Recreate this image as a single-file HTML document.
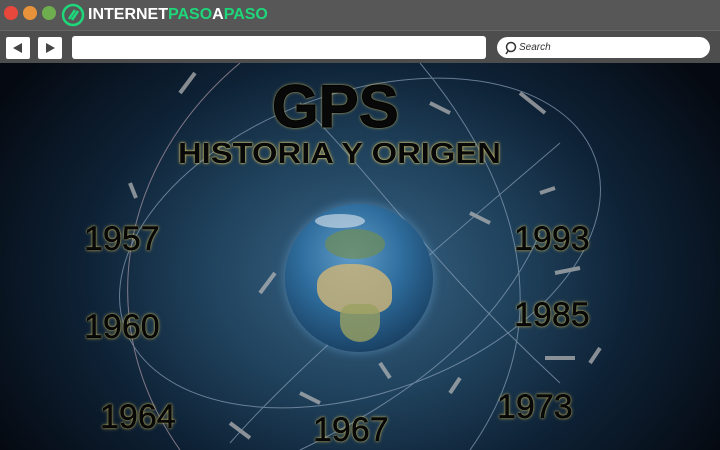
<!DOCTYPE html>
<html><head><style>
body{margin:0;width:720px;height:450px;overflow:hidden;font-family:"Liberation Sans",sans-serif;background:#000}
.top{position:absolute;left:0;top:0;width:720px;height:30px;background:#575757}
.bar{position:absolute;left:0;top:30px;width:720px;height:33px;background:#4d4d4d;border-top:1px solid #666}
.dot{position:absolute;top:6px;width:14px;height:14px;border-radius:50%}
.scene{position:absolute;left:0;top:63px;width:720px;height:387px;background:radial-gradient(ellipse 420px 330px at 360px 210px,#3a6688 0%,#21445f 35%,#0e2236 65%,#050a12 100%)}
.t{position:absolute;color:#080808;font-weight:bold;text-shadow:0 0 1px #e8dc90,0 0 2px #c8b860,0 0 4px rgba(200,180,90,.6);white-space:nowrap}
.y{font-size:34px;font-weight:normal;-webkit-text-stroke:0.5px #000}
</style></head><body>
<div class="top">
<div class="dot" style="left:4px;background:#e8473b"></div>
<div class="dot" style="left:23px;background:#e8923b"></div>
<div class="dot" style="left:42px;background:#6fae4e"></div>
<svg style="position:absolute;left:61px;top:3px" width="24" height="24" viewBox="0 0 24 24"><circle cx="12" cy="12" r="10" fill="none" stroke="#1ed77a" stroke-width="2.5"/><path d="M8 16 L14 7 M11 17 L17 8" stroke="#1ed77a" stroke-width="2.5"/></svg>
<div style="position:absolute;left:88px;top:6px;font-size:16px;font-weight:bold;color:#fff">INTERNET<span style="color:#1ed77a">PASO</span>A<span style="color:#1ed77a">PASO</span></div>
</div>
<div class="bar">
<div style="position:absolute;left:6px;top:6px;width:24px;height:22px;background:#fff;border-radius:2px"><div style="position:absolute;left:7px;top:6px;border-right:9px solid #444;border-top:5px solid transparent;border-bottom:5px solid transparent"></div></div>
<div style="position:absolute;left:38px;top:6px;width:24px;height:22px;background:#fff;border-radius:2px"><div style="position:absolute;left:8px;top:6px;border-left:9px solid #444;border-top:5px solid transparent;border-bottom:5px solid transparent"></div></div>
<div style="position:absolute;left:72px;top:5px;width:414px;height:23px;background:#fff;border-radius:3px"></div>
<div style="position:absolute;left:497px;top:6px;width:213px;height:21px;background:#fff;border-radius:11px;font-size:10px;color:#333;line-height:21px;text-indent:22px;font-style:italic">Search<svg style="position:absolute;left:7px;top:4px" width="14" height="14"><circle cx="7" cy="6" r="4.5" fill="none" stroke="#333" stroke-width="1.5"/><path d="M4 10 L2 13" stroke="#333" stroke-width="1.5"/></svg></div>
</div>
<div class="scene">
<svg width="720" height="387" style="position:absolute;left:0;top:0" fill="none" stroke="#8aa0b8" stroke-width="1" opacity="0.7">
<ellipse cx="360" cy="180" rx="250" ry="150" transform="rotate(-20 360 180)"/>
<path d="M240 0 C120 100 90 260 180 387" stroke="#b09aa8"/>
<path d="M420 0 C520 120 560 260 470 387"/>
<path d="M300 40 C380 120 430 200 560 320"/>
<path d="M230 380 C300 300 420 200 560 80"/>
<path d="M540 170 C500 260 420 330 300 387"/>
<g stroke="#bbb" stroke-width="4"><path d="M180 30 l15 -20"/><path d="M430 40 l20 10"/><path d="M520 30 l25 20"/><path d="M130 120 l6 15"/><path d="M540 130 l15 -5"/><path d="M260 230 l15 -20"/><path d="M555 210 l25 -5"/><path d="M545 295 l30 0"/><path d="M590 300 l10 -15"/><path d="M300 330 l20 10"/><path d="M450 330 l10 -15"/><path d="M230 360 l20 15"/><path d="M380 300 l10 15"/><path d="M470 150 l20 10"/></g>
</svg>
<div style="position:absolute;left:285px;top:141px;width:148px;height:148px;border-radius:50%;background:radial-gradient(circle at 45% 35%,#5f9bc8 0%,#2f6e9e 40%,#1b4468 75%,#0c2440 100%);box-shadow:0 0 10px rgba(120,180,230,.5)">
<div style="position:absolute;left:32px;top:60px;width:75px;height:50px;background:#c8b37a;border-radius:40% 50% 30% 50%;opacity:.85"></div>
<div style="position:absolute;left:55px;top:100px;width:40px;height:38px;background:#9aa060;border-radius:30% 30% 50% 50%;opacity:.8"></div>
<div style="position:absolute;left:40px;top:25px;width:60px;height:30px;background:#6f8d56;border-radius:50%;opacity:.7"></div>
<div style="position:absolute;left:30px;top:10px;width:50px;height:14px;background:#dfe8f0;border-radius:50%;opacity:.6"></div>
</div>
</div>
<div class="t" style="left:272px;top:72px;font-size:60px;-webkit-text-stroke:1px #000">GPS</div>
<div class="t" style="left:178px;top:138px;font-size:29px;transform:scaleX(1.13);transform-origin:left">HISTORIA Y ORIGEN</div>
<div class="t y" style="left:84px;top:220px">1957</div>
<div class="t y" style="left:84px;top:308px">1960</div>
<div class="t y" style="left:100px;top:398px">1964</div>
<div class="t y" style="left:313px;top:411px">1967</div>
<div class="t y" style="left:497px;top:388px">1973</div>
<div class="t y" style="left:514px;top:296px">1985</div>
<div class="t y" style="left:514px;top:220px">1993</div>
</body></html>
